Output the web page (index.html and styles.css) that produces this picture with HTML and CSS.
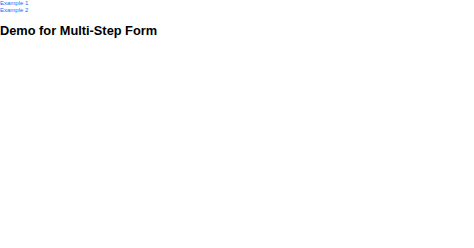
FILE: index.html
```html
<!DOCTYPE html>
<html>
<head>
<meta charset="utf-8">
<link rel="stylesheet" href="styles.css">
</head>
<body>
<nav class="links">
<a href="#">Example 1</a>
<a href="#">Example 2</a>
</nav>
<h1 class="title">Demo for Multi-Step Form</h1>
</body>
</html>
```
FILE: styles.css
```css
html, body {
  margin: 0;
  padding: 0;
  background: #fff;
  font-family: "Liberation Sans", Arial, sans-serif;
}
.links {
  display: flex;
  flex-direction: column;
  align-items: flex-start;
}
.links a {
  font-size: 6px;
  line-height: 7px;
  color: #0d6efd;
  text-decoration: none;
}
.title {
  margin: 9px 0 0 0;
  font-size: 12.8px;
  line-height: 15px;
  font-weight: bold;
  color: #000;
}
```
